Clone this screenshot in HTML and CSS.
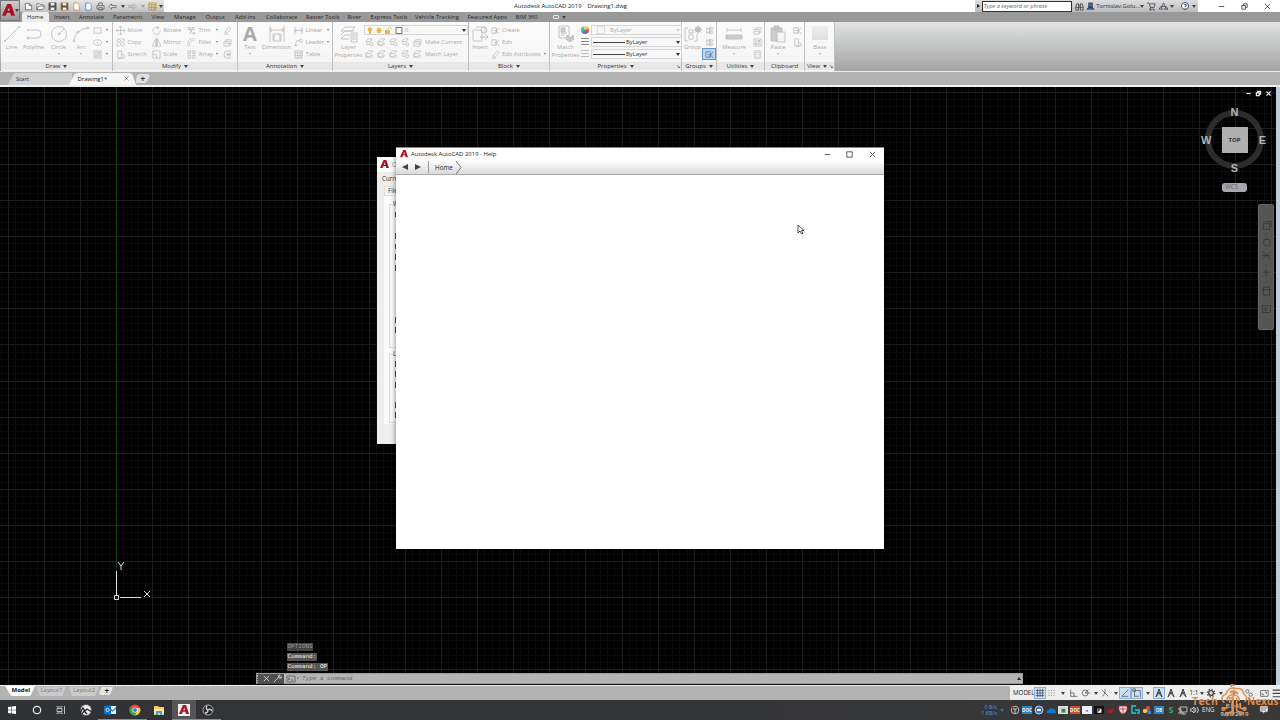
FILE: index.html
```html
<!DOCTYPE html>
<html lang="en"><head><meta charset="utf-8"><title>Autodesk AutoCAD 2019</title><link rel="stylesheet" href="styles.css"></head>
<body>
<svg class="defs">
<symbol id="new" viewBox="0 0 10 10"><path d="M1.500 1.500h4.500l2.500 2.500v4.500h-7zM6 1.500v2.500h2.500" fill="#fff"/></symbol>
<symbol id="open" viewBox="0 0 10 10"><path d="M1 8.500V2h3l1 1h3v1.500M1 8.500l2-4h6.500l-2 4z" fill="#fff"/></symbol>
<symbol id="save" viewBox="0 0 10 10"><path d="M1 1h8v8H1z" fill="#555"/><path d="M3 1h4v3H3zM3 6h4v3H3z" fill="#eee" stroke="none"/></symbol>
<symbol id="page" viewBox="0 0 10 10"><path d="M2 1h4l2 2v6H2z" fill="#fff"/></symbol>
<symbol id="print" viewBox="0 0 10 10"><path d="M3 4V1h4v3M1 4h8v4H1zM3 6h4v3H3z" fill="#ddd"/></symbol>
<symbol id="undo" viewBox="0 0 10 10"><path d="M4 2L1 5l3 3V6h5V4H4z" fill="#eee"/></symbol>
<symbol id="redo" viewBox="0 0 10 10"><path d="M6 2l3 3-3 3V6H1V4h5z"/></symbol>
<symbol id="line" viewBox="0 0 18 18"><path d="M2 16L16 2"/><circle cx="2" cy="16" r=".7"/><circle cx="16" cy="2" r=".7"/></symbol>
<symbol id="poly" viewBox="0 0 18 18"><path d="M3 5h9a3.500 3.500 0 010 8H3"/><circle cx="3" cy="13" r="1"/><circle cx="3" cy="5" r=".6"/></symbol>
<symbol id="circle" viewBox="0 0 18 18"><circle cx="9" cy="9" r="7.500"/><path d="M9 9l5-5M7.500 9h3M9 7.500v3"/></symbol>
<symbol id="arc" viewBox="0 0 18 18"><path d="M2 16Q3 4 16 3"/><circle cx="2" cy="16" r="1"/><circle cx="6" cy="7" r="1"/><circle cx="16" cy="3" r="1"/></symbol>
<symbol id="dim" viewBox="0 0 18 18"><path d="M2 1v16M16 1v16M2 5h14M4 3L2 5l2 2M14 3l2 2-2 2M5 9h8v7H5zM5 12h2m-2 2h2m4-2h2m-2 2h2M7 9v2m4-2v2"/></symbol>
<symbol id="layers" viewBox="0 0 18 18"><path d="M1 6l4-4h10l-4 4zM1 10l4-4h9M1 14l4-4h5M1 14h8M11 8h6v9h-6zM12 10h4m-4 2h4m-4 2h4" fill="none"/></symbol>
<symbol id="insert" viewBox="0 0 18 18"><path d="M2 5h9v11H2zM5 2h9v5M9 12h8l-3-3m3 3l-3 3"/><circle cx="13" cy="5" r="3"/></symbol>
<symbol id="match" viewBox="0 0 18 18"><path d="M2 1h10v12H2zM4 8h6M4 10h4"/><path d="M4 3h4v4H4zM10 10l3 3 3-3 1 4-4 3-4-3z" fill="#ccc"/></symbol>
<symbol id="group" viewBox="0 0 18 18"><path d="M4 3H1v13h3M10 16h3V9"/><circle cx="7" cy="12" r="2.500"/><path d="M5 5h4v3H5z"/><circle cx="14" cy="4.500" r="2.600" fill="#ccc"/><path d="M14 0v9M10 4.500h8M11 1.500l6 6m0-6l-6 6"/></symbol>
<symbol id="measure" viewBox="0 0 18 18"><path d="M2 3v4m14-4v4M2 5h14"/><path d="M1 10h16v4H1z" fill="#ccc"/></symbol>
<symbol id="paste" viewBox="0 0 18 18"><path d="M2 3h11v13H2zM5 1h5v4H5z" fill="#ccc"/><path d="M8 7h8v10H8z" fill="#f5f5f5"/></symbol>
<symbol id="rect" viewBox="0 0 10 10"><path d="M1 2h8v6H1z"/></symbol>
<symbol id="oval" viewBox="0 0 10 10"><ellipse cx="5" cy="5" rx="4.500" ry="3"/><circle cx="5" cy="5" r=".5"/></symbol>
<symbol id="hatch" viewBox="0 0 10 10"><path d="M1 1h8v8H1zM3 3h4v4H3zM2 8l6-6"/></symbol>
<symbol id="move" viewBox="0 0 10 10"><path d="M5 0v10M0 5h10M3 2l2-2 2 2M3 8l2 2 2-2M2 3L0 5l2 2m6-4l2 2-2 2"/></symbol>
<symbol id="copy" viewBox="0 0 10 10"><circle cx="3" cy="3" r="2"/><circle cx="7" cy="7" r="2"/><path d="M6 1h3v3M1 6v3h3"/></symbol>
<symbol id="stretch" viewBox="0 0 10 10"><path d="M2 1h4v8H2zM6 4l3 2v3H3"/></symbol>
<symbol id="rotate" viewBox="0 0 10 10"><path d="M7 2a4 4 0 10 2 3M5 0l3 2-3 2"/></symbol>
<symbol id="mirror" viewBox="0 0 10 10"><path d="M4 1v8H0zM6 1v8h4zM5 0v10"/></symbol>
<symbol id="scale" viewBox="0 0 10 10"><path d="M1 1h8v8H1zM1 5h4v4"/></symbol>
<symbol id="trim" viewBox="0 0 10 10"><path d="M1 1l6 8M7 1L3 9M1 4h8M1 2h8"/><circle cx="8" cy="8" r="1"/></symbol>
<symbol id="fillet" viewBox="0 0 10 10"><path d="M1 9V6q0-5 5-5h3M3 9V7q0-4 4-4h2" stroke-dasharray="2 .5"/></symbol>
<symbol id="array" viewBox="0 0 10 10"><path d="M1 1h3v3H1zM6 1h3v3H6zM1 6h3v3H1zM6 6h3v3H6z"/></symbol>
<symbol id="pencil" viewBox="0 0 10 10"><path d="M2 7l5-6 2 2-5 5zM1 9h5"/></symbol>
<symbol id="box" viewBox="0 0 10 10"><path d="M1 4h6v5H1zM3 4V2h6v5H7M2 6h4"/></symbol>
<symbol id="offset" viewBox="0 0 10 10"><path d="M9 1H5a4 4 0 000 8h4M9 3.500H6a1.500 1.500 0 000 3h3M3 5h6"/></symbol>
<symbol id="linear" viewBox="0 0 10 10"><path d="M1 1v8M9 1v8M1 5h8M3 3L1 5l2 2m4-4l2 2-2 2"/></symbol>
<symbol id="leader" viewBox="0 0 10 10"><path d="M1 9l2-6h3M1 9l3-1"/><circle cx="7.500" cy="3" r="1.700"/></symbol>
<symbol id="table" viewBox="0 0 10 10"><path d="M1 1h8v8H1zM1 3h8M1 6h8M4 3v6M7 3v6"/></symbol>
<symbol id="lay" viewBox="0 0 10 10"><path d="M1 4l2-3h5L6 4zM2 5v2h3"/><circle cx="7" cy="7" r="1.700"/></symbol>
<symbol id="lay2" viewBox="0 0 10 10"><path d="M1 4l3-3h5L6 4zM1 6l3 2 4-3M1 4v4h4M5 9l4-3"/></symbol>
<symbol id="edit" viewBox="0 0 10 10"><path d="M1 2h5v6H1zM3 5h4M4 8l5-6M7 6l2 3"/></symbol>
<symbol id="tree" viewBox="0 0 10 10"><path d="M2 1v8M5 1v8M2 3h5M2 7h5"/><circle cx="7" cy="3" r="1.500"/><circle cx="7" cy="7" r="1.500"/></symbol>
<symbol id="calc" viewBox="0 0 10 10"><path d="M2 1h6v8H2zM3 3h4M3 5h1m2 0h1M3 7h1m2 0h1"/></symbol>
<symbol id="acad" viewBox="0 0 10 10"><path d="M0 9L4 0h3l3 9H7L5.300 2.600 3 9z" fill="#b30f24" stroke="none"/><path d="M3 6h5" stroke="#8a0e20" stroke-width="1.300"/></symbol>
<symbol id="x" viewBox="0 0 10 10"><path d="M2 2l6 6M8 2L2 8"/></symbol>
<symbol id="min" viewBox="0 0 10 10"><path d="M2 5h6"/></symbol>
<symbol id="max" viewBox="0 0 10 10"><path d="M2 2h6v6H2z"/></symbol>
<symbol id="rest" viewBox="0 0 10 10"><path d="M2 4h4v4H2zM4 4V2h4v4H6"/></symbol>
<symbol id="gear" viewBox="0 0 10 10"><circle cx="5" cy="5" r="2.400" stroke-width="1.400"/><circle cx="5" cy="5" r="3.700" stroke-dasharray="1.300 1.600" stroke-width="1.300"/></symbol>
<symbol id="man" viewBox="0 0 10 10"><path d="M5 1L2 9l3-4 3 4L5 1v5M3 5h4" stroke-width="1"/></symbol>
</svg>
<div class="app">
<header class="top">
 <div class="quick"><svg class="s9"><use href="#new"/></svg><svg class="s9"><use href="#open"/></svg><svg class="s9"><use href="#save"/></svg><svg class="s9 orange"><use href="#save"/></svg><svg class="s9 gold"><use href="#page"/></svg><svg class="s9 blue"><use href="#page"/></svg><svg class="s9"><use href="#print"/></svg><svg class="s9"><use href="#undo"/></svg><i class="dn"></i><svg class="s9 faint"><use href="#redo"/></svg><i class="dn faint"></i><svg class="s9 gold"><use href="#table"/></svg><i class="dn"></i></div>
 <div class="title"><span>Autodesk AutoCAD 2019</span><span>Drawing1.dwg</span></div>
 <div class="info"><i class="rt"></i><div class="search">Type a keyword or phrase</div>
  <svg class="s9" viewBox="0 0 10 10"><path d="M1 9V5l1-3h2v7zM9 9V5L8 2H6v7zM4 4h2M4 6h2M1 6h3m2 0h3" stroke="#333"/></svg>
  <svg class="s9" viewBox="0 0 10 10"><path d="M3 1h4v5H3zM1 8h8L7 6H3z" fill="#4169b0" stroke="#234"/></svg>
  <span class="user">Tornislav.Golu...</span><i class="dn"></i>
  <svg class="s9" viewBox="0 0 10 10"><path d="M0 1h2l2 5h4l1-4H3M4 6l-1 2h5" stroke="#334"/><circle cx="4" cy="9" r=".6"/><circle cx="8" cy="9" r=".6"/></svg>
  <svg class="s9" viewBox="0 0 10 10"><path d="M5 1L3 5h4zM2 5L0 8h4zM8 5L6 8h4z" stroke="#334"/></svg><i class="dn"></i>
  <span class="help">?</span><i class="dn"></i></div>
 <div class="ctl"><svg class="s9"><use href="#min"/></svg><svg class="s9"><use href="#rest"/></svg><svg class="s9"><use href="#x"/></svg></div>
 <div class="logo"><svg viewBox="0 0 10 10"><use href="#acad"/></svg><i class="dn"></i></div>
</header>
<nav class="menu"><span class="on">Home</span><span>Insert</span><span>Annotate</span><span>Parametric</span><span>View</span><span>Manage</span><span>Output</span><span>Add-ins</span><span>Collaborate</span><span>Raster Tools</span><span>River</span><span>Express Tools</span><span>Vehicle Tracking</span><span>Featured Apps</span><span>BIM 360</span><span class="mini"><b></b><i class="dn"></i></span></nav>
<section class="ribbon">
 <div class="panel draw"><div class="body">
  <div class="big"><svg><use href="#line"/></svg>Line</div><div class="big"><svg><use href="#poly"/></svg>Polyline</div><div class="big"><svg><use href="#circle"/></svg>Circle<i class="dn"></i></div><div class="big"><svg><use href="#arc"/></svg>Arc<i class="dn"></i></div>
  <div class="rows"><p><svg class="s9"><use href="#rect"/></svg><i class="dn"></i></p><p><svg class="s9"><use href="#oval"/></svg><i class="dn"></i></p><p><svg class="s9"><use href="#hatch"/></svg><i class="dn"></i></p></div></div><footer>Draw<i class="dn"></i></footer></div>
 <div class="panel modify"><div class="body">
  <div class="rows"><p><svg class="s9"><use href="#move"/></svg>Move</p><p><svg class="s9"><use href="#copy"/></svg>Copy</p><p><svg class="s9"><use href="#stretch"/></svg>Stretch</p></div>
  <div class="rows"><p><svg class="s9"><use href="#rotate"/></svg>Rotate</p><p><svg class="s9"><use href="#mirror"/></svg>Mirror</p><p><svg class="s9"><use href="#scale"/></svg>Scale</p></div>
  <div class="rows arrows"><p><svg class="s9"><use href="#trim"/></svg>Trim<i class="dn"></i></p><p><svg class="s9"><use href="#fillet"/></svg>Fillet<i class="dn"></i></p><p><svg class="s9"><use href="#array"/></svg>Array<i class="dn"></i></p></div>
  <div class="rows"><p><svg class="s9"><use href="#pencil"/></svg></p><p><svg class="s9"><use href="#box"/></svg></p><p><svg class="s9"><use href="#offset"/></svg></p></div></div><footer>Modify<i class="dn"></i></footer></div>
 <div class="panel annot"><div class="body">
  <div class="big"><b class="bigA">A</b>Text<i class="dn"></i></div><div class="big"><svg><use href="#dim"/></svg>Dimension</div>
  <div class="rows arrows"><p><svg class="s9"><use href="#linear"/></svg>Linear<i class="dn"></i></p><p><svg class="s9"><use href="#leader"/></svg>Leader<i class="dn"></i></p><p><svg class="s9"><use href="#table"/></svg>Table</p></div></div><footer>Annotation<i class="dn"></i></footer></div>
 <div class="panel layer"><div class="body">
  <div class="big"><svg><use href="#layers"/></svg>Layer<br>Properties</div>
  <div class="rows"><div class="combo lc"><svg viewBox="0 0 40 9"><g stroke="none" fill="#e5bc4b"><circle cx="5" cy="3.500" r="2.300"/><path d="M4 5h2v3H4z"/><circle cx="14" cy="4.500" r="2.200"/><path d="M20 4h5v4h-5z"/></g><path d="M14 1v7M10.500 4.500h7M12 2l4 5m0-5l-4 5M23 4V2q2-2 3 0v2" stroke="#e5bc4b"/><path d="M31 1.500h6v6h-6z" stroke="#555"/></svg>0<i class="dn"></i></div>
  <p><svg class="s9"><use href="#lay"/></svg><svg class="s9"><use href="#lay2"/></svg><svg class="s9"><use href="#lay"/></svg><svg class="s9"><use href="#lay"/></svg><svg class="s9"><use href="#box"/></svg>Make Current</p><p><svg class="s9"><use href="#lay2"/></svg><svg class="s9"><use href="#lay2"/></svg><svg class="s9"><use href="#lay2"/></svg><svg class="s9"><use href="#lay"/></svg><svg class="s9"><use href="#lay2"/></svg>Match Layer</p></div></div><footer>Layers<i class="dn"></i></footer></div>
 <div class="panel block"><div class="body"><div class="big"><svg><use href="#insert"/></svg>Insert</div>
  <div class="rows"><p><svg class="s9"><use href="#edit"/></svg>Create</p><p><svg class="s9"><use href="#edit"/></svg>Edit</p><p><svg class="s9"><use href="#pencil"/></svg>Edit Attributes<i class="dn"></i></p></div></div><footer>Block<i class="dn"></i></footer></div>
 <div class="panel props"><div class="body"><div class="big"><svg><use href="#match"/></svg>Match<br>Properties</div>
  <div class="rows"><p><b class="wheel"></b></p><p><b class="weights"></b></p><p><b class="weights dash"></b></p></div>
  <div class="rows"><div class="combo pale"><em></em>ByLayer<i class="dn"></i></div><div class="combo"><s></s>ByLayer<i class="dn"></i></div><div class="combo"><s></s>ByLayer<i class="dn"></i></div></div></div><footer>Properties<i class="dn"></i><i class="corner">↘</i></footer></div>
 <div class="panel groups"><div class="body"><div class="big"><svg><use href="#group"/></svg>Group</div><div class="rows"><p><svg class="s9"><use href="#tree"/></svg></p><p><svg class="s9"><use href="#tree"/></svg></p><p class="hot"><svg class="s9"><use href="#edit"/></svg></p></div></div><footer>Groups<i class="dn"></i></footer></div>
 <div class="panel utils"><div class="body"><div class="big"><svg><use href="#measure"/></svg>Measure<i class="dn"></i></div><div class="rows"><p><svg class="s9"><use href="#box"/></svg></p><p><svg class="s9"><use href="#hatch"/></svg></p><p><svg class="s9"><use href="#calc"/></svg></p></div></div><footer>Utilities<i class="dn"></i></footer></div>
 <div class="panel clip"><div class="body"><div class="big"><svg><use href="#paste"/></svg>Paste<i class="dn"></i></div><div class="rows"><p><svg class="s9"><use href="#edit"/></svg></p><p><svg class="s9"><use href="#stretch"/></svg></p></div></div><footer>Clipboard</footer></div>
 <div class="panel view"><div class="body"><div class="big"><b class="base"></b>Base<i class="dn"></i></div></div><footer>View<i class="dn"></i><i class="corner">↘</i></footer></div>
</section>
<div class="docs"><svg viewBox="0 0 160 13"><path d="M8 13L13 3q1-2 3-2h56v12z" fill="#d2d2d2"/><path d="M69 13L74 3q1-2 3-2h52q3 0 4 3l3 9z" fill="#f5f5f5"/><path d="M136 9q0-7 4-7h7q4 0 2 4-2 5-5 5h-8z" fill="#e0e0e0"/></svg><span>Start</span><span class="active">Drawing1*</span><svg class="s7"><use href="#x"/></svg><b>+</b></div>
<main class="canvas">
 <i class="yaxis"></i><i class="xaxis"></i>
 <svg class="ucs" viewBox="0 0 40 42"><path d="M3.500 34V10M7 36.500h21M1.500 34.500h4v4h-4zM5 1l3 4 3-4M8 5v4M31 30l6 6m0-6l-6 6"/></svg>
 <div class="docctl"><svg class="s7"><use href="#min"/></svg><svg class="s7"><use href="#rest"/></svg><svg class="s7"><use href="#x"/></svg></div>
 <div class="cube"><b class="n">N</b><b class="w">W</b><b class="e">E</b><b class="s">S</b><span>TOP</span></div>
 <div class="wcs">WCS</div>
 <svg class="navbar" viewBox="0 0 16 126"><path d="M5 13h7v7H5zM7 11h7v7M8 24v2M5 35q0-4 4-4t4 4-4 4-4-4M4 45l9 9m0-9l-9 9M4 50h9M8 60v2M5 69h7M8 66v8M8 80v1M5 86h7v9H5zM4 89h9M8 99v1M4 107h9v8H4zM7 109v4l3-2z"/></svg>
 <section class="options"><div class="otitle"><svg class="s9"><use href="#acad"/></svg>Options</div><div class="curr">Current</div><div class="otab">Files</div><div class="opage"><div class="gr"><span>W</span><svg viewBox="0 0 8 140"><path d="M7 10v5M7 31v6M7 42v5M7 52v6M7 63v6M7 115v6M7 125v6"/></svg></div><div class="gr"><span>L</span><svg viewBox="0 0 8 68"><path d="M7 6v6M7 16v6M7 27v6M7 47v6M7 57v6"/></svg></div></div></section>
 <section class="helpwin"><div class="htitle"><svg class="s9"><use href="#acad"/></svg><span>Autodesk AutoCAD 2019 - Help</span><svg class="s9"><use href="#min"/></svg><svg class="s9"><use href="#max"/></svg><svg class="s9"><use href="#x"/></svg></div><div class="hbar"><i class="back"></i><i class="fwd"></i><b></b><span>Home</span><svg viewBox="0 0 7 13"><path d="M1 0l5 6.500L1 13"/></svg></div></section>
 <svg class="pointer" viewBox="0 0 8 12"><path d="M1 1v8l2-2 1.500 3 1.500-.8L4.500 6.500H7z" fill="#fff"/></svg>
 <div class="history"><span class="old">OPTIONS</span><span>Command:</span><span>Command: OP</span></div>
 <div class="command"><div class="handle"><i></i><svg class="s9"><use href="#x"/></svg><svg class="s9" viewBox="0 0 10 10"><path d="M1 9l5-5m0 0q-1-3 2-3L7 3l1 1 1.500-1q0 3-3.500 1" stroke="#eee"/></svg></div><svg class="prompt" viewBox="0 0 14 8"><path d="M1 1h8v6H1zM2 3l2 1-2 1M5 5h2M11 3h2"/></svg><span>Type a command</span><i class="up"></i></div>
</main>
<div class="status"><div class="lay"><svg viewBox="0 0 120 13"><path d="M5 0h30l-4 9q-1 1-3 1H13q-2 0-3-2z" fill="#fff"/><path d="M36 1h30l-4 9H40zM69 1h30l-4 9H72z" fill="#cacaca"/><path d="M102 1h11l-3 8h-8q-4 0-2-4z" fill="#e5e5e5"/></svg><b>Model</b><span>Layout1</span><span>Layout2</span><b>+</b></div>
 <div class="tools"><span>MODEL</span>
 <svg class="sel" viewBox="0 0 12 12"><path d="M3 1v10M6 1v10M9 1v10M1 3h10M1 6h10M1 9h10"/></svg><svg viewBox="0 0 12 12"><path d="M2 3h8M2 6h8M2 9h8" stroke-dasharray="1 2"/></svg><i class="dn wide"></i><svg viewBox="0 0 12 12"><path d="M2 2v8h8M2 6h4v4"/></svg><svg viewBox="0 0 12 12"><circle cx="5" cy="6" r="3.500"/><path d="M5 6h6M5 6l4-4"/></svg><i class="dn"></i><svg viewBox="0 0 12 12"><path d="M2 2l8 8M6 6V1M6 6l-3 4"/></svg><i class="dn"></i><svg class="sel" viewBox="0 0 12 12"><path d="M2 10l8-8M2 10h8"/></svg><svg class="sel" viewBox="0 0 12 12"><path d="M3 3h7v8M3 3v7h5M1 1h3v3H1z"/></svg><i class="dn wide"></i><svg class="sel"><use href="#man"/></svg><svg><use href="#man"/></svg><svg><use href="#man"/></svg><span class="ratio">1:1</span><i class="dn"></i><svg><use href="#gear"/></svg><i class="dn last"></i><svg class="far" viewBox="0 0 12 12"><path d="M6 2v8M2 6h8"/></svg><svg class="far" viewBox="0 0 12 12"><circle cx="4" cy="4" r="2"/><circle cx="8" cy="8" r="2"/></svg><svg viewBox="0 0 12 12"><path d="M2 3h9v7H2zM7 5h2v2M4 6v2h2"/></svg><svg viewBox="0 0 12 12"><path d="M2 2.500h9M2 6.500h9M2 10.500h9" stroke-width="1.400"/></svg></div></div>
<div class="taskbar">
 <div class="apps"><a><svg viewBox="0 0 12 12"><path d="M2 3l3.500-.5v3.300H2zM6 2.400L10 2v3.800H6zM2 6.300h3.500v3.300L2 9zM6 6.300h4V10l-4-.5z" fill="#fff" stroke="none"/></svg></a><a><svg viewBox="0 0 12 12"><circle cx="6" cy="6" r="3.700" stroke="#eee" stroke-width="1.200"/></svg></a><a><svg viewBox="0 0 12 12" stroke="#ddd"><path d="M2 2v1h5V2M2 4.500h5v3H2zM2 10V9h5v1M9.500 2v8M9 5h1"/></svg></a><a><svg viewBox="0 0 12 12"><circle cx="6" cy="6" r="5.500" fill="#eee"/><path d="M0 9l3-5 2 3 2-2 5 3M2 10l2-3 3 3" stroke="#222" stroke-width="1.300"/></svg></a><a class="run"><svg viewBox="0 0 12 12" stroke="none"><path d="M5 2h7v8H5z" fill="#e5f2fc"/><path d="M5 3l3.500 3L12 3v2L8.500 8 5 5z" fill="#379be5"/><path d="M0 2l7-1v10l-7-1z" fill="#0872c5"/><circle cx="3.500" cy="6" r="1.600" stroke="#fff"/></svg></a><a class="run"><svg viewBox="0 0 12 12" stroke="none"><circle cx="6" cy="6" r="5.500" fill="#e34b3c"/><path d="M1.200 3.300A5.500 5.500 0 006 11.500L8 7H4z" fill="#35a853"/><path d="M11 4a5.500 5.500 0 01-5 7.500L8 7 7 4z" fill="#f6c934"/><circle cx="6" cy="6" r="2.600" fill="#fff"/><circle cx="6" cy="6" r="2" fill="#347de0"/></svg></a><a><svg viewBox="0 0 12 12" stroke="none"><path d="M1 2h4l1 1h5v8H1z" fill="#f4ce63"/><path d="M1 5h10v4H1z" fill="#ffe99b"/><path d="M3 7h6v4H7V9H5v2H3z" fill="#3ca3dc"/></svg></a><a class="run cur"><svg viewBox="0 0 12 12"><path d="M0 0h12v12H0z" fill="#f4eeee" stroke="none"/><use href="#acad" x="1" y="1" width="10" height="10"/></svg></a><a class="run"><svg viewBox="0 0 12 12"><circle cx="6" cy="6" r="5" fill="#222" stroke="#ccc"/><path d="M6 6q-3-1-1-4M6 6q2-2 4 1M6 6q0 3-3 3" stroke="#ccc" stroke-width="1.400"/></svg></a></div>
 <div class="tray"><div class="speed">0 B/s<br>1 KB/s</div><i class="dn"></i>
 <svg viewBox="0 0 10 10"><circle cx="5" cy="5" r="3.800" stroke="#ddd"/><path d="M3 4h4M5 4v4" stroke="#eee"/><circle cx="2" cy="2" r="1.300" fill="#d22" stroke="none"/></svg><b class="t1">DOC</b><svg viewBox="0 0 10 10"><circle cx="5" cy="5" r="4" fill="#3b79c7" stroke="#dde"/><path d="M3 5h4" stroke="#fff" stroke-width="2"/></svg><svg viewBox="0 0 10 10"><path d="M1 8q-1-3 2-3 1-3 4-1 3 0 3 4z" fill="#087ad5" stroke="none"/></svg><b class="t2">▣</b><b class="t3">DOC</b><b class="t4">●</b><b class="t5">◪</b><svg viewBox="0 0 10 10"><path d="M1 7l3-3v2l4-3-1 4-3 1z" fill="#a32029" stroke="#a32029"/></svg><svg viewBox="0 0 10 10"><path d="M1 1h8v4q-1 3-4 4-3-1-4-4z" fill="#eee" stroke="#c22"/><path d="M5 2v6M2 4h6" stroke="#c22"/></svg><svg viewBox="0 0 10 10"><path d="M6 1H2v7h4M5 5h4v3H7" stroke="#18aeb7" stroke-width="1.800"/></svg><svg viewBox="0 0 10 10" stroke="none"><circle cx="6" cy="3" r="2" fill="#e34c3b"/><path d="M4 4l5 2v3H6z" fill="#3f83d7"/><circle cx="3" cy="6" r="2.200" fill="#efc64c"/></svg><b class="t1">OB</b><b class="t6">S</b><svg viewBox="0 0 10 10" stroke="#ddd"><path d="M2 2h7v5H2zM5 7v2M3 9h5M0 4h3v4H0"/></svg><svg viewBox="0 0 10 10" stroke="#eee"><path d="M0 4h2l2-2v6L2 6H0zM5 3q2 2 0 4M7 2q3 3 0 6"/></svg><span class="eng">ENG</span><span class="time">13:41<br>9/18/2019</span><svg class="note" viewBox="0 0 10 10"><path d="M1 1h8v6H6L4 9V7H1z" fill="#fff"/><path d="M2 3h6M2 5h5" stroke="#444"/></svg></div>
</div>
<div class="mark"><span>Tech</span><svg viewBox="0 0 34 36" stroke="#e4934f" stroke-width="1.800"><path d="M6 20q-6-7 2-10Q11 1 20 4q7-1 8 6 6 4 1 9M9 18q0-7 7-7t7 7M12 20V14h3v16l-5 2M16 12v22M20 14v15l5 2M24 20v6l5 1M9 21v5H4M12 8q6-3 10 2M14 2V0h4"/><circle cx="5" cy="27" r="1.500"/><circle cx="9" cy="33" r="1.500"/><circle cx="25" cy="32" r="1.500"/><circle cx="29" cy="27" r="1.500"/></svg><span>Nexus</span></div>
</div></body></html>
```
FILE: styles.css
```css
*,*::before{box-sizing:border-box}
body{margin:0;font:6.2px/8px "Open Sans","Noto Sans",sans-serif;color:#333;background:#000;overflow:hidden}
p{margin:0}i,em{font-style:normal}
svg{display:block;flex:none}
.defs{position:absolute;width:0;height:0}
.app{position:relative;width:1280px;height:720px;display:flex;flex-direction:column;overflow:hidden;fill:none;stroke:#555;stroke-width:.8}
.s9{width:9px;height:9px}.s7{width:7px;height:7px}
.dn{display:block;width:0;height:0;border:2px solid transparent;border-top:3px solid #444;border-bottom:0;flex:none}
.rt{border:2px solid transparent;border-left:3px solid #222;border-right:0}
.faint{opacity:.35}.orange{stroke:#cc8730}.gold{stroke:#bd8c26}.blue{stroke:#267bb9}
.top{height:12px;display:flex;background:#fff;position:relative;flex:none}
.quick{width:164px;background:linear-gradient(#e6e6e6,#c0c0c0);display:flex;align-items:center;padding-left:24px;gap:3px}
.quick .dn{margin:0 .5px}.quick .dn:last-child{margin-left:-1px}
.title{width:811px;padding-left:350px;display:flex;gap:6px;line-height:12px;color:#222;font-size:5.950px;white-space:nowrap}
.info{width:223px;background:linear-gradient(#ddd,#bbb);display:flex;align-items:center;padding-left:2px;gap:2.800px}
.search{width:90px;height:11px;border:1px solid #333;background:#fff;font-style:italic;line-height:9px;padding-left:1px;font-size:5.600px;color:#666;margin-left:-1px;flex:none;white-space:nowrap}
.user{width:43px;font-size:5.900px;white-space:nowrap;flex:none;margin-left:-2px}.user+.dn{margin-left:-2px}
.help{width:8px;height:8px;flex:none;border:1px solid #456;border-radius:50%;text-align:center;line-height:7px;background:#fff;color:#159;font-weight:bold;margin-left:4px}
.ctl{display:flex;align-items:center;padding-left:19px;gap:14px;stroke:#222}
.logo{position:absolute;left:0;top:0;width:20px;height:21px;background:linear-gradient(#ccc,#999);border:1px solid #777;display:flex;align-items:center;padding-left:1px}
.logo svg{width:13px;height:15px}
.menu{height:10px;background:#999;display:grid;grid-template-columns:26.500px 25px 34px 38.500px 22.500px 31.500px 29.500px 31px 40px 41.500px 23px 44.500px 52.500px 48px 37px 20px;padding-left:22px;line-height:10px;font-size:5.850px;color:#252525;white-space:nowrap;flex:none}
.menu span{padding-left:5px}.menu .on{background:#ededed;border-radius:2px 2px 0 0;font-size:5.700px}
.menu span:not(.on){padding-left:5.500px}
.mini{display:flex;align-items:center;gap:3px}.mini b{width:6px;height:4px;border:1px solid #eee;border-radius:1px}
.ribbon{height:50px;background:linear-gradient(#e0e2e3,#a5a5a5);display:flex;flex:none;padding-left:1px;border-bottom:1px solid #eee}
.panel{background:#f7f7f7;border-right:1px solid #bebebe;display:flex;flex-direction:column;color:#a8a8a8;stroke:#b8b8b8}
.body{height:40px;display:flex;padding-top:2px;background:linear-gradient(#fbfbfb,#f5f5f5)}
.panel footer{height:8px;background:#e7e7e7;color:#333;line-height:7px;display:flex;justify-content:center;align-items:center;gap:3px;position:relative;font-size:6px}
.corner{font-size:5px;position:absolute;right:1px}
.big{display:flex;flex-direction:column;align-items:center;text-align:center;line-height:7.500px;font-size:5.800px;padding-top:1px;flex:none}
.big svg{width:18px;height:18px;margin-bottom:1px}.big .dn{margin-top:1px;border-width:2.500px 1.700px 0;border-top-color:#aaa}
.rows{display:grid;grid-template-rows:repeat(3,12px);flex:none}
.rows p{display:flex;align-items:center;height:12px;gap:2.500px;white-space:nowrap;font-size:5.800px}
.rows p .dn{border-width:2.500px 1.700px 0;border-top-color:#777}.arrows .dn{margin-left:auto;margin-right:2px}
.draw{width:112px}.draw .big:nth-child(1){width:21px}.draw .big:nth-child(2){width:23px}.draw .big:nth-child(3){width:27px}.draw .big:nth-child(4){width:18px}.draw .rows{padding-left:3px}.draw .rows p{gap:4px}
.modify{width:125px}.modify .body{padding-left:3px}.modify .rows:nth-child(1){width:36px}.modify .rows:nth-child(2){width:35px}.modify .rows:nth-child(3){width:32px}.modify .rows:nth-child(4){padding-left:4px}
.annot{width:95px}.annot .big:nth-child(1){width:24px}.annot .big:nth-child(2){width:29px}.annot .rows{padding-left:3px;width:39px}
.bigA{font:bold 20px/18px "Open Sans",sans-serif;height:19px;color:#aaa}
.layer{width:136px}.layer .big{width:31px}.layer .rows p{padding-left:1px;gap:3px}
.combo{height:10px;margin:1px 0;border:1px solid #d5d5d5;background:#f8f8f8;display:flex;align-items:center;color:#333;font-size:5.800px;width:91px}
.combo .dn{margin-left:auto;margin-right:1px;border-top-color:#333}.lc{width:104px;color:#aaa}.lc svg{width:40px;height:9px}
.block{width:81px}.block .big{width:22px}.block .rows p{gap:2px}.block .rows .dn{margin-left:1px}
.props{width:132px}.props .big{width:31px}.props .rows:nth-child(2){width:10px}.pale{color:#aaa}.pale .dn{opacity:.2}.combo em{width:8px;height:8px;border:1px solid #ddd;margin:0 5px}.combo s{width:32px;height:1px;background:#444;margin:0 1px}
.wheel{width:8px;height:8px;border-radius:50%;background:conic-gradient(#de9,#f7b443,#e14942,#a74ac4,#477ce0,#39b5c9,#5fc15d,#de9)}
.weights{width:8px;height:8px;background:repeating-linear-gradient(#888 0 1px,transparent 1px 3px)}.dash{opacity:.5}
.groups{width:35px}.groups .big{width:21px}.hot{background:#bcd5ef;outline:1px solid #6694c5;height:10px!important;align-self:center;stroke:#57799b}
.utils{width:48px}.utils .big{width:34px}.clip{width:40px}.clip .big{width:26px}.view{width:30px}.view .big{width:30px}.view footer{justify-content:flex-start;padding-left:2px}
.groups .rows p,.utils .rows p,.clip .rows p{width:12px;padding-left:2px}.base{width:16px;height:14px;background:linear-gradient(#eee,#dedede);margin:1px 0 4px}
.docs{height:15px;background:#b2b2b2;border-bottom:2px solid #eee;display:flex;position:relative;align-items:center;line-height:13px;flex:none}
.docs>svg:first-child{width:160px;height:13px;margin-right:-144px;stroke:none}.docs span,.docs b,.docs .s7{position:relative}
.docs span{width:61.500px;font-size:5.950px;padding-top:1px}.docs .active{width:45px;color:#111}.docs b{margin-left:11px;font-size:8px}
.canvas{height:598px;flex:none;position:relative;border-right:4px solid #b9cfda;background-color:#000;background-image:repeating-linear-gradient(90deg,#1d1d1d 0 1px,transparent 1px 36.090px),repeating-linear-gradient(#1d1d1d 0 1px,transparent 1px 36.090px),repeating-linear-gradient(90deg,#0b0b0b 0 1px,transparent 1px 7.218px),repeating-linear-gradient(#0b0b0b 0 1px,transparent 1px 7.218px);background-position:-28.090px 0,0 -31.300px,-28.090px 0,0 -31.300px;background-size:1332px 100%,100% 648px,1332px 100%,100% 648px}
.yaxis{position:absolute;left:116px;top:0;width:1px;height:480px;background:#184018}.xaxis{position:absolute;left:144px;right:0;top:510px;height:1px;background:#351619}
.ucs{position:absolute;left:113px;top:474px;width:40px;height:42px;stroke-width:1;stroke:#ddd}
.docctl{position:absolute;right:4px;top:3px;display:flex;gap:3px;stroke:#eee;stroke-width:1.800}
.cube{position:absolute;left:1205px;top:22px;width:59px;height:61px;display:grid;place-items:center}
.cube:before{content:"";position:absolute;width:59px;height:59px;border:6px solid #2c2c2c;border-radius:50%}
.cube b{position:absolute;color:#b5b5b5;font:bold 11px/12px "Liberation Sans",sans-serif}.n{top:-3px}.w{left:-4px}.e{right:-2px}.s{bottom:-4px}
.cube span{width:26px;height:26px;background:#b0b0b0;line-height:26px;text-align:center;font-weight:bold;position:relative;font-size:6px}
.wcs{position:absolute;left:1222px;top:96px;width:25px;height:9px;border-radius:3px;background:#aaa6ae;padding-left:3px;color:#666}
.navbar{position:absolute;left:1258px;top:117px;width:16px;height:126px;background:#555;border:1px solid #666;border-radius:2px;stroke:#303030}
.options{position:absolute;left:377px;top:70px;width:150px;height:287px;background:#eee}
.otitle{height:15px;background:#fff;display:flex;gap:3px;align-items:center;padding-left:3px;color:#888}
.curr{padding:3px 5px}.otab{width:40px;height:10px;margin-left:7px;border:1px solid #ddd;padding-left:3px;background:#f4f4f4}
.opage{margin-left:7px;height:228px;background:#fafafa;padding:8px 5px;display:grid;grid-template-rows:144px 69px;gap:6px}
.gr{border:1px solid #ddd;position:relative}.gr span{position:absolute;left:3px;top:-5px;background:#fafafa}.gr svg{width:8px;margin-top:-3px;margin-left:-1px;stroke:#111;stroke-width:1.500}.gr:first-child svg{height:140px}.gr:last-child svg{height:68px;margin-top:0}
.helpwin{position:absolute;left:396px;top:60px;width:488px;height:402px;background:#fff;box-shadow:0 0 5px #0008;border-top:1px solid #888}
.htitle{height:12px;display:flex;align-items:center;padding-left:4px;gap:2px;color:#222;font-size:5.950px}.htitle span{width:409.500px;flex:none}.htitle .s9:first-child{width:8px;height:8px;margin-right:1px}.htitle .s9:not(:first-child){margin-right:11.800px;stroke:#222}
.hbar{height:15px;background:linear-gradient(#fff,#dadada);border-bottom:1px solid #aaa;display:flex;align-items:center;padding-left:6px;color:#222}
.back,.fwd{border:3px solid transparent;border-right:6px solid #444;border-left:0}.fwd{border-left:6px solid #444;border-right:0;margin-left:7px}.hbar b{width:1px;height:12px;background:#999;margin-left:7px;margin-right:6px}.hbar span{font-size:6.300px;width:20px;padding-top:2px}.hbar svg{height:13px;width:7px}
.pointer{position:absolute;left:797px;top:137px;width:8px;height:12px;stroke:#222}
.history{position:absolute;left:287px;top:556px;display:flex;flex-direction:column;align-items:flex-start;gap:2px;font:6px/8px "Liberation Mono",monospace;color:#eee}.history span{background:#555;padding:0 .5px}.history .old{background:#444;color:#999}
.command{position:absolute;left:256px;top:586px;width:767px;height:11px;background:#b5b5b5;display:flex;align-items:center;color:#666;font:italic 6px/11px "Liberation Mono",monospace;border:1px solid #999}.handle{height:10px;width:27px;background:#505050;display:flex;align-items:center;gap:2px;stroke:#eee}.handle i{height:8px;width:3px;border-left:1px dotted #bbb}.prompt{width:14px;height:8px;margin:0 2px}
.up{border:2px solid transparent;border-bottom:3px solid #222;border-top:0;margin-left:auto;margin-right:1px}
.status{height:15px;background:#b3b3b3;border-top:1px solid #eee;display:flex;flex:none;color:#222}
.lay{width:1010px;display:flex;position:relative;line-height:9px}.lay>svg{height:13px;width:120px;margin-right:-120px;stroke:none}.lay b,.lay span{position:relative}.lay b:nth-of-type(1){margin-left:11.500px;width:29px;color:#111;font-size:6px}.lay span{width:32.500px;color:#777;font-size:5.950px}.lay b:last-child{font-size:8px;margin-left:-1px}
.tools{width:270px;background:#eeeeed;display:flex;align-items:center;padding-left:3px;font-size:6.200px;stroke:#444}.tools>span:first-child{width:26px}.tools svg{width:10px;height:10px;margin-right:2px}.tools .sel{background:#cbdff5;outline:1px solid #8db0dc}.tools .dn{margin:0 2px 0 1.500px}.tools .wide{margin:0 4px 0 2px}.tools .far{margin-right:5px}.tools .last{margin-right:6px}.ratio{width:9px}
.taskbar{height:20px;background:linear-gradient(90deg,#303236,#383838);display:flex;justify-content:space-between;flex:none}.apps{display:flex}.apps a{width:24.500px;display:grid;place-items:center}.apps svg{width:12px;height:12px}.run{border-bottom:1px solid #5899d2}.cur{background:#555}
.tray{display:flex;align-items:center;width:300px;gap:2px;color:#eee}.tray>svg,.tray>b{width:10px;height:10px;flex:none}.speed{width:17px;color:#3f9fe5;font-size:5.400px;line-height:6px;text-align:right;white-space:nowrap}.tray>.dn{margin:0 4px 0 1px;border-top-color:#2c72b6}.tray b{font:bold 4.500px/8px "Open Sans",sans-serif;text-align:center;height:8px;background:#347fc2}.tray .t2{background:#ddd;color:#398a37}.tray .t3{background:#c45435}.tray .t4{background:#eef;color:#3689d5}.tray .t5{background:#111}.tray .t6{background:none;color:#2aad68;font-size:9px}.eng{width:16px}.time{width:29px;text-align:center;line-height:8px;font-size:5.900px}.tray .note{margin-left:8px}
.mark{position:absolute;left:1192px;top:683px;display:flex;align-items:center;color:#df8c49;font:bold 10.500px/12px "Open Sans",sans-serif;letter-spacing:.4px}.mark svg{width:30px;height:36px;margin:0 -2px 0 -1px}.mark span{width:28px}.mark span:last-child{width:33px;font-size:10px;letter-spacing:0}
```
